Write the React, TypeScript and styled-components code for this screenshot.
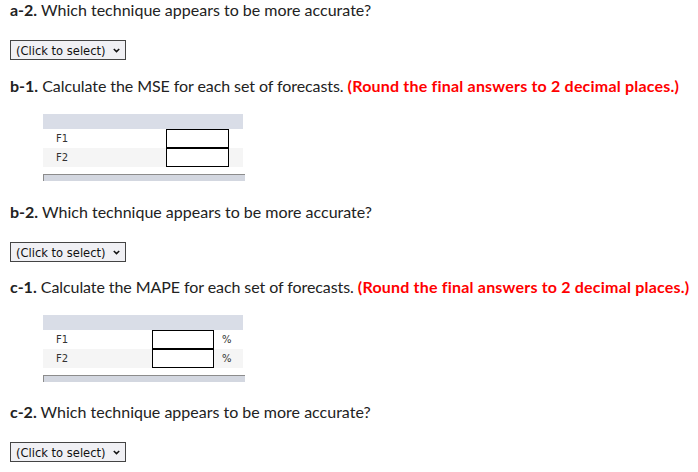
import React from "react";
import styled, { createGlobalStyle } from "styled-components";

const Global = createGlobalStyle`
  html, body { margin: 0; padding: 0; background: #fff; }
  body { font-family: "Lato", "Open Sans", sans-serif; color: #222; }
`;

const Page = styled.div`
  padding: 0 10px;
  display: flex;
  flex-direction: column;
  align-items: flex-start;
`;

const Question = styled.p<{ $mt: number }>`
  margin: ${(p) => p.$mt}px 0 0 0;
  font-size: 16px;
  line-height: 20px;
  white-space: nowrap;
  color: #222;
  font-variant-ligatures: none;
`;

const Tag = styled.strong`
  font-weight: 700;
`;

const Body = styled.span`
  letter-spacing: -0.08px;
`;

const Note = styled.strong`
  font-weight: 700;
  color: #f00;
  letter-spacing: 0.2px;
`;

const SelectBox = styled.div<{ $mt: number }>`
  margin-top: ${(p) => p.$mt}px;
  box-sizing: border-box;
  width: 116px;
  height: 20px;
  border: 1px solid #444;
  background: #f0f0f4;
  display: flex;
  align-items: center;
  justify-content: space-between;
  padding: 0 5px 0 5px;
  font-family: "DejaVu Sans Condensed", "DejaVu Sans", sans-serif;
  font-size: 12.8px;
  color: #111;
`;

const Chevron = () => (
  <svg width="7" height="5" viewBox="0 0 7 5" fill="none">
    <path d="M0.8 1l2.7 2.6L6.2 1" stroke="#111" strokeWidth="1.5" />
  </svg>
);

const Table = styled.div<{ $mt: number }>`
  margin-top: ${(p) => p.$mt}px;
  margin-left: 33px;
  width: 202px;
  display: flex;
  flex-direction: column;
`;

const HeaderBand = styled.div`
  width: 200px;
  height: 15px;
  background: #d9dde7;
`;

const Row = styled.div<{ $alt?: boolean; $cols: string }>`
  width: 200px;
  height: 19px;
  display: grid;
  grid-template-columns: ${(p) => p.$cols};
  align-items: center;
  background: ${(p) => (p.$alt ? "#f5f5f5" : "#fff")};
`;

const Label = styled.span`
  padding-left: 13px;
  font-family: "DejaVu Sans", sans-serif;
  font-size: 10px;
  color: #333;
`;

const Input = styled.div`
  box-sizing: border-box;
  height: 19px;
  border: 1px solid #000;
  background: #fff;
`;

const Pct = styled.span`
  padding-left: 8px;
  font-family: "DejaVu Sans", sans-serif;
  font-size: 10px;
  color: #333;
`;

const Bar = styled.div`
  margin-top: 7px;
  box-sizing: border-box;
  width: 202px;
  height: 7px;
  background: #d3d7e0;
  border-top: 1px solid #8c8c8c;
  border-left: 1px solid #8c8c8c;
`;

const Select = ({ mt }: { mt: number }) => (
  <SelectBox $mt={mt}>
    <span>(Click to select)</span>
    <Chevron />
  </SelectBox>
);

export default function App() {
  return (
    <>
      <Global />
      <Page>
        <Question $mt={0}>
          <Tag>a-2.</Tag> Which technique appears to be more accurate?
        </Question>
        <Select mt={20} />
        <Question $mt={16}>
          <Tag>b-1.</Tag> <Body>Calculate the MSE for each set of forecasts.</Body>{" "}
          <Note>(Round the final answers to 2 decimal places.)</Note>
        </Question>
        <Table $mt={18}>
          <HeaderBand />
          <Row $cols="123px 63px 14px">
            <Label>F1</Label>
            <Input />
            <span />
          </Row>
          <Row $alt $cols="123px 63px 14px">
            <Label>F2</Label>
            <Input />
            <span />
          </Row>
          <Bar />
        </Table>
        <Question $mt={21}>
          <Tag>b-2.</Tag> Which technique appears to be more accurate?
        </Question>
        <Select mt={20} />
        <Question $mt={15}>
          <Tag>c-1.</Tag> <Body>Calculate the MAPE for each set of forecasts.</Body>{" "}
          <Note>(Round the final answers to 2 decimal places.)</Note>
        </Question>
        <Table $mt={18}>
          <HeaderBand />
          <Row $cols="109px 62px 29px">
            <Label>F1</Label>
            <Input />
            <Pct>%</Pct>
          </Row>
          <Row $alt $cols="109px 62px 29px">
            <Label>F2</Label>
            <Input />
            <Pct>%</Pct>
          </Row>
          <Bar />
        </Table>
        <Question $mt={20}>
          <Tag>c-2.</Tag> Which technique appears to be more accurate?
        </Question>
        <Select mt={20} />
      </Page>
    </>
  );
}
